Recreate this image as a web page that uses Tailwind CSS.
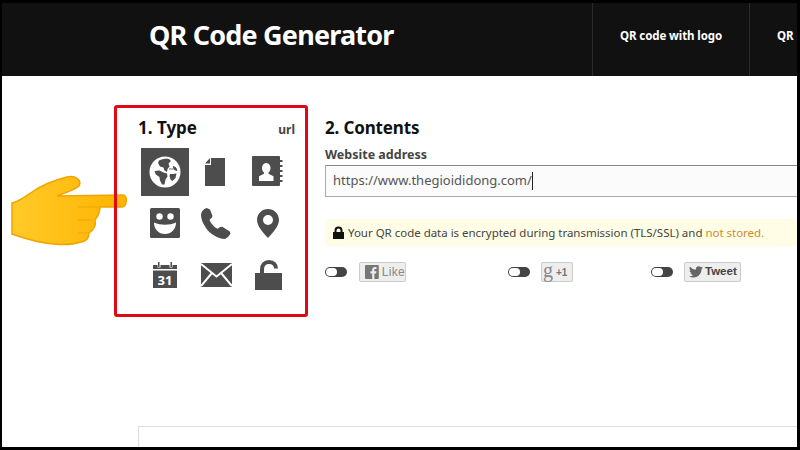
<!DOCTYPE html>
<html lang="en">
<head>
    <meta charset="UTF-8">
    <title>QR Code Generator</title>
    <script src="https://cdn.jsdelivr.net/npm/@tailwindcss/browser@4"></script>
</head>
<body class="bg-black">
    <div class="relative w-[800px] h-[450px] overflow-hidden bg-white border-black border-t-[3px] border-l-[2px] border-r-[3px] border-b-[3px] font-['Noto_Sans',sans-serif] text-[#333]">

        <header class="flex h-[73px] bg-[#111] text-white">
            <h1 class="w-[590px] shrink-0 pl-[147px] pt-[13px] text-[27px] leading-[38px] tracking-[-0.8px] font-bold">QR Code Generator</h1>
            <a class="w-[157px] shrink-0 border-l border-[#2c2c2c] pl-[27px] pt-[25px] text-[11.5px] leading-[16px] tracking-[-0.1px] font-bold">QR code with logo</a>
            <a class="shrink-0 border-l border-[#2c2c2c] pl-[27px] pt-[25px] text-[11.5px] leading-[16px] font-bold whitespace-nowrap">QR code</a>
        </header>

        <main class="flex pl-[136px] pt-[40px]">
            <section class="w-[157px] shrink-0">
                <div class="flex items-baseline justify-between h-[32px]">
                    <h2 class="text-[17px] leading-[24px] font-bold text-[#111]">1. Type</h2>
                    <span class="text-[12px] font-bold text-[#444]">url</span>
                </div>
                <div class="grid grid-cols-[48px_52px_54px] grid-rows-[48px_54px_50px] ml-[3px] items-center justify-items-center">
                    <div class="flex items-center justify-center w-[48px] h-[48px] bg-[#4d4d4d]">
                        <svg width="32" height="32" viewBox="0 0 32 32"><circle cx="16" cy="16" r="15.500" fill="#fff"/><path fill="#4d4d4d" d="M10 4.500c3-1.500 7-2 10-1.500l2 2-2.500 2.500 1 3-2 2.500-.5 3-2.500-1.500-1-3-3.500-1-2-3.500zM5.500 15l5-.5 4 2 3.500 1 .5 3-2 3-1 5-2.500 0-2-4-.6-3.500-3.600-2.500zM24 10l2.500 1 2 3.500-1 .6-2-1-1.500-2.500zM21 18l3 0 3.500-.5-1 4.500-3 3-2-1.500-1-3.500z"/><path fill="none" stroke="#4d4d4d" stroke-width=".8" d="M20 13h8"/></svg>
                    </div>
                    <svg width="20" height="28" viewBox="0 0 20 28"><path fill="#4d4d4d" d="M6 0h14v28H0V7h6zM0 5.500 5 0v5.500z"/></svg>
                    <svg width="32" height="32" viewBox="0 0 32 32"><path fill="#4d4d4d" d="M1 0h26a1 1 0 0 1 1 1v3h2.500v2H28v3h2.500v2H28v3h2.500v2H28v3h2.500v2H28v3h2.500v2H28v3a1 1 0 0 1-1 1H1a1 1 0 0 1-1-1V1a1 1 0 0 1 1-1z"/><path fill="#fff" d="M14 7c2.800 0 4.500 2.200 4.500 5 0 2-.8 3.600-2 4.600v1.200l5 2.400V25H7v-4.800l5-2.400v-1.200c-1.200-1-2-2.600-2-4.600 0-2.800 1.600-5 4-5z"/></svg>

                    <svg width="30" height="30" viewBox="0 0 30 30"><rect width="30" height="30" rx="1.500" fill="#4d4d4d"/><circle cx="9.500" cy="8.500" r="3.200" fill="#fff"/><circle cx="20.500" cy="8.500" r="3.200" fill="#fff"/><path fill="#fff" d="M4 14.500c3.500 1.600 7 2.200 11 2.200s7.500-.6 11-2.200c0 6.800-4.800 11.500-11 11.500S4 21.300 4 14.500z"/></svg>
                    <svg class="ml-[2px]" width="31" height="31" viewBox="0 0 31 31"><path fill="#4d4d4d" d="M5.500 0 9 1.500l2.500 6.500-1 2-2 1.800c1 3 4.500 7.500 8 9l2.800-1.800 2-.3 7.500 4.800.7 2.200L27 29l-3 2c-7.500-.2-15-5.200-19-11C1.500 15 0 10.500 0 6.500 .5 3.500 2.500 1 5.500 0z"/></svg>
                    <svg width="22" height="29" viewBox="0 0 22 29"><path fill="#4d4d4d" fill-rule="evenodd" d="M11 0c6 0 11 4.800 11 11 0 6-6 12.500-11 18C6 23.500 0 17 0 11 0 4.800 5 0 11 0zm0 6a5 5 0 1 0 0 10 5 5 0 0 0 0-10z"/></svg>

                    <svg width="24" height="26" viewBox="0 0 24 26"><path fill="#4d4d4d" d="M0 3h4.500v2.500h3V3h9v2.500h3V3H24v23H0z"/><rect x="5" y="0" width="1.500" height="5" fill="#4d4d4d"/><rect x="17.500" y="0" width="1.500" height="5" fill="#4d4d4d"/><rect x="0" y="7" width="24" height="1.500" fill="#fff"/><text x="12" y="23" text-anchor="middle" font-family="Noto Sans, sans-serif" font-weight="700" font-size="13" fill="#fff">31</text></svg>
                    <svg class="ml-[2px]" width="31" height="24" viewBox="0 0 31 24"><rect width="31" height="24" fill="#4d4d4d"/><path fill="none" stroke="#fff" stroke-width="2" d="M0 1l15.500 12.500L31 1M0 23l10.500-12.500M31 23 20.500 10.500"/></svg>
                    <svg width="27" height="30" viewBox="0 0 27 30"><path fill="#4d4d4d" d="M0 13h27v17H0z"/><path fill="none" stroke="#4d4d4d" stroke-width="4" d="M7 13V9.500C7 5 9.500 2 14 2s7 3 7 6.500"/></svg>
                </div>
            </section>

            <section class="ml-[30px] flex-1 min-w-0">
                <h2 class="text-[17px] leading-[24px] tracking-[-0.15px] font-bold text-[#111]">2. Contents</h2>
                <label class="block mt-[6px] text-[12.5px] leading-[17px] font-bold text-[#444]">Website address</label>
                <div class="flex items-center h-[32px] mt-[2px] pl-[7px] border border-[#aaa] border-t-[#888] border-r-0 bg-[#fbfbfb] text-[13px] text-[#555]">https://www.thegioididong.com/<span class="w-px h-[18px] bg-[#222]"></span></div>
                <div class="flex items-center gap-[3px] h-[27px] mt-[22px] pl-[7px] bg-[#fffde6] text-[11.5px] tracking-[-0.02px] text-[#444] whitespace-nowrap">
                    <svg width="13" height="13" viewBox="0 0 13 13"><path fill="#111" d="M1 6h11v7H1z"/><path fill="none" stroke="#111" stroke-width="2" d="M3.500 6V4.500a3 3 0 0 1 6 0V6"/></svg>
                    <span>Your QR code data is encrypted during transmission (TLS/SSL) and <span class="text-[#d08a2e]">not stored.</span></span>
                </div>
                <div class="flex items-center h-[20px] mt-[16px]">
                    <span class="relative w-[22px] h-[10px] rounded-full bg-[#444]"><span class="absolute left-[1px] top-[1px] w-[11px] h-[8px] rounded-full bg-white"></span></span>
                    <span class="flex items-center gap-[3px] ml-[12px] h-[20px] w-[47px] pl-[5px] rounded-[2px] border border-[#ccc] bg-[#eee] text-[12px] tracking-[0.3px] text-[#888] font-['Liberation_Sans',sans-serif]">
                        <svg width="14" height="14" viewBox="0 0 14 14"><rect width="14" height="14" rx="1" fill="#777"/><path fill="#eee" d="M9.500 14V8.500h1.800l.3-2.200H9.500V5c0-.6.2-1 1-1h1.200V2.100C11.400 2 10.800 2 10.100 2 8.500 2 7.300 3 7.300 4.800v1.500H5.500v2.200h1.800V14z"/></svg>
                        Like
                    </span>
                    <span class="relative ml-[102px] w-[22px] h-[10px] rounded-full bg-[#444]"><span class="absolute left-[1px] top-[1px] w-[11px] h-[8px] rounded-full bg-white"></span></span>
                    <span class="flex items-center gap-[3px] ml-[11px] h-[20px] w-[32px] pl-[1px] rounded-[2px] border border-[#ccc] bg-[#eee] text-[10px] font-bold text-[#777] font-['Liberation_Sans',sans-serif]">
                        <span class="font-['Liberation_Serif',serif] text-[20px] font-normal leading-none -mt-[4px] text-[#888]">g</span>+1
                    </span>
                    <span class="relative ml-[78px] w-[22px] h-[10px] rounded-full bg-[#444]"><span class="absolute left-[1px] top-[1px] w-[11px] h-[8px] rounded-full bg-white"></span></span>
                    <span class="flex items-center gap-[2px] ml-[11px] h-[20px] w-[57px] pl-[4px] rounded-[2px] border border-[#ccc] bg-[#eee] text-[11.5px] font-bold text-[#444] font-['Liberation_Sans',sans-serif]">
                        <svg width="14" height="12" viewBox="0 0 24 20"><path fill="#666" d="M24 2.400c-.9.4-1.800.7-2.800.8 1-.6 1.800-1.600 2.200-2.700-1 .6-2 1-3.100 1.200A4.900 4.900 0 0 0 11.900 6.100 14 14 0 0 1 1.700.9a4.900 4.900 0 0 0 1.500 6.600c-.8 0-1.600-.2-2.200-.6 0 2.400 1.700 4.400 3.900 4.900-.7.200-1.500.2-2.200.1.600 2 2.400 3.400 4.600 3.400A9.900 9.900 0 0 1 0 17.300 14 14 0 0 0 7.500 19.500c9.100 0 14.300-7.700 14-14.600 1-.7 1.800-1.500 2.500-2.500z"/></svg>
                        Tweet
                    </span>
                </div>
            </section>
        </main>

        <div class="absolute left-[136px] top-[423px] w-[700px] h-[40px] border border-[#ddd]"></div>

        <svg class="absolute left-[-2px] top-[162px]" width="130" height="90" viewBox="0 0 130 90">
            <defs><linearGradient id="hand" x1="0" x2="1" y1="0" y2="0"><stop offset="0" stop-color="#ffca28"/><stop offset="1" stop-color="#ffb300"/></linearGradient></defs>
            <path fill="url(#hand)" stroke="#f0a400" stroke-width="1.500" d="M12 38C20 36 26 31 32 27 42 20 55 15 67 12c9-2 15 4 12 9-3 3-14 7-22 10l66-1c5 0 4 12-1 12h-22c0 5-2 9-5 13 1 4 0 9-6 13 0 5-2 8-8 9-6 2-17 3-27 2-15-1-28-5-42-10z"/>
            <path fill="none" stroke="#f0a400" stroke-width="1.200" d="M78 42h20M78 55h15M78 68h9"/>
        </svg>

        <div class="absolute left-[112px] top-[102px] w-[194px] h-[212px] border-[3px] border-[#e00812] rounded-[3px]"></div>
    </div>
</body>
</html>
